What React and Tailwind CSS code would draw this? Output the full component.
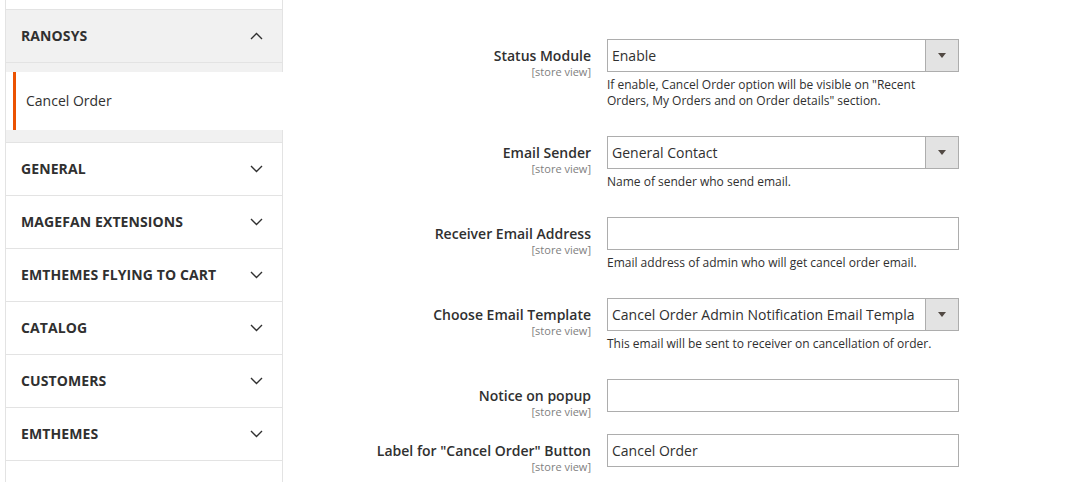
import React from "react";

const font = { fontFamily: '"Open Sans", "Liberation Sans", sans-serif' };

function Chevron({ up }) {
  return (
    <svg width="13" height="8" viewBox="0 0 13 8" className="block">
      {up ? (
        <polyline points="1,7 6.5,1.5 12,7" fill="none" stroke="#303030" strokeWidth="1.4" />
      ) : (
        <polyline points="1,1 6.5,6.5 12,1" fill="none" stroke="#303030" strokeWidth="1.4" />
      )}
    </svg>
  );
}

function NavRow({ title }) {
  return (
    <div className="h-[53px] border-b border-[#e3e3e3] flex items-center justify-between pl-[15px] pr-[19px] pb-[1px]">
      <span className="text-[14px] font-bold text-[#303030] tracking-[0.1px]">{title}</span>
      <Chevron />
    </div>
  );
}

function Select({ value }) {
  return (
    <div className="h-[33px] border border-[#adadad] flex bg-white">
      <div className="flex-1 pl-[4px] pr-[10px] flex items-center text-[14px] text-[#303030] overflow-hidden whitespace-nowrap">
        {value}
      </div>
      <div className="w-[33px] bg-[#e3e3e3] border-l border-[#adadad] flex items-center justify-center">
        <svg width="8" height="5" viewBox="0 0 8 5">
          <polygon points="0,0 8,0 4,5" fill="#514943" />
        </svg>
      </div>
    </div>
  );
}

function Input({ value }) {
  return (
    <div className="h-[33px] border border-[#adadad] bg-white pl-[4px] flex items-center text-[14px] text-[#303030]">
      {value}
    </div>
  );
}

function FormRow({ label, children, note }) {
  return (
    <div className="flex pb-[22px]">
      <div className="w-[308px] h-[33px] text-right pt-[7px]">
        <div className="text-[14px] leading-[19px] font-semibold text-[#303030] whitespace-nowrap">{label}</div>
        <div className="text-[11px] leading-[13px] text-[#808080]">[store view]</div>
      </div>
      <div className="ml-[16px] w-[352px]">
        {children}
        {note && (
          <div className="mt-[5px] mb-[5px] text-[12px] leading-[16px] text-[#303030]">{note}</div>
        )}
      </div>
    </div>
  );
}

export default function App() {
  return (
    <div className="w-[1089px] h-[482px] bg-white flex overflow-hidden" style={font}>
      <div className="ml-[5px] w-[278px] border-x border-[#e3e3e3] shrink-0 h-full">
        <div className="h-[10px] border-b border-[#e3e3e3]" />
        <div className="h-[53px] bg-[#f1f1f1] border-b border-[#e3e3e3] flex items-center justify-between pl-[15px] pr-[19px] pb-[1px]">
          <span className="text-[14px] font-bold text-[#303030] tracking-[0.1px]">RANOSYS</span>
          <Chevron up />
        </div>
        <div className="h-[9px] bg-[#f1f1f1]" />
        <div className="h-[58px] bg-white -mr-px pl-[7px] flex">
          <div className="border-l-[3px] border-[#eb5202] flex-1 flex items-center pl-[10px] pb-[1px] text-[14px] text-[#303030]">
            Cancel Order
          </div>
        </div>
        <div className="h-[13px] bg-[#f1f1f1] border-b border-[#e3e3e3]" />
        <NavRow title="GENERAL" />
        <NavRow title="MAGEFAN EXTENSIONS" />
        <NavRow title="EMTHEMES FLYING TO CART" />
        <NavRow title="CATALOG" />
        <NavRow title="CUSTOMERS" />
        <NavRow title="EMTHEMES" />
      </div>
      <div className="flex-1 pt-[39px]">
        <FormRow
          label="Status Module"
          note={<>If enable, Cancel Order option will be visible on "Recent<br />Orders, My Orders and on Order details" section.</>}
        >
          <Select value="Enable" />
        </FormRow>
        <FormRow label="Email Sender" note="Name of sender who send email.">
          <Select value="General Contact" />
        </FormRow>
        <FormRow label="Receiver Email Address" note="Email address of admin who will get cancel order email.">
          <Input value="" />
        </FormRow>
        <FormRow label="Choose Email Template" note="This email will be sent to receiver on cancellation of order.">
          <Select value="Cancel Order Admin Notification Email Templa" />
        </FormRow>
        <FormRow label="Notice on popup">
          <Input value="" />
        </FormRow>
        <FormRow label={'Label for "Cancel Order" Button'}>
          <Input value="Cancel Order" />
        </FormRow>
      </div>
    </div>
  );
}
